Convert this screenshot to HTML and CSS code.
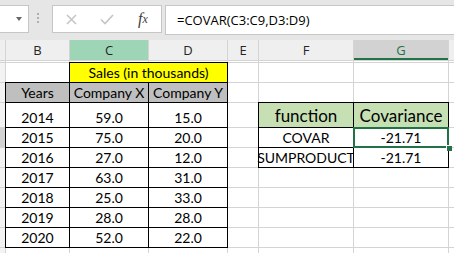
FILE: index.html
```html
<!DOCTYPE html>
<html lang="en">
<head>
  <meta charset="UTF-8">
  <meta name="viewport" content="width=device-width, initial-scale=1.0">
  <title>COVAR vs SUMPRODUCT</title>
  <link rel="stylesheet" href="styles.css">
</head>
<body>
  <div class="formula-bar">
    <div class="name-box"><span class="arrow"></span></div>
    <div class="grip"><i></i><i></i><i></i></div>
    <div class="fx-buttons">
      <span class="btn">
        <svg width="11" height="11" viewBox="0 0 11 11"><path d="M1 1L10 10M10 1L1 10" stroke="#c4c4c4" stroke-width="1.5" fill="none"/></svg>
      </span>
      <span class="btn">
        <svg width="14" height="11" viewBox="0 0 14 11"><path d="M1 5.5L5 9.5L13 1" stroke="#c4c4c4" stroke-width="1.6" fill="none"/></svg>
      </span>
      <span class="btn fx">f<sub>x</sub></span>
    </div>
    <div class="formula-input">=COVAR(C3:C9,D3:D9)</div>
  </div>

  <div class="sheet">
    <!-- column headers -->
    <div class="rh ch"></div>
    <div class="ch">B</div>
    <div class="ch ch-hot">C</div>
    <div class="ch">D</div>
    <div class="ch">E</div>
    <div class="ch">F</div>
    <div class="ch ch-sel">G</div>
    <div class="ch"></div>

    <!-- row 1 (thin) -->
    <div class="rh"></div><div></div><div></div><div></div><div></div><div></div><div></div><div></div>

    <!-- row 2 -->
    <div class="rh"></div>
    <div></div>
    <div class="bx yellow span2">Sales (in thousands)</div>
    <div></div><div></div><div></div><div></div>

    <!-- row 3 -->
    <div class="rh"></div>
    <div class="bx grey">Years</div>
    <div class="bx grey">Company X</div>
    <div class="bx grey">Company Y</div>
    <div></div><div></div><div></div><div></div>

    <!-- row 4 -->
    <div class="rh"></div>
    <div class="bx">2014</div><div class="bx">59.0</div><div class="bx">15.0</div>
    <div></div>
    <div class="bx green big">function</div><div class="bx green big">Covariance</div>
    <div></div>

    <!-- row 5 -->
    <div class="rh rh-sel"></div>
    <div class="bx">2015</div><div class="bx">75.0</div><div class="bx">20.0</div>
    <div></div>
    <div class="bx">COVAR</div><div class="bx selected">-21.71</div>
    <div></div>

    <!-- row 6 -->
    <div class="rh"></div>
    <div class="bx">2016</div><div class="bx">27.0</div><div class="bx">12.0</div>
    <div></div>
    <div class="bx">SUMPRODUCT</div><div class="bx">-21.71</div>
    <div></div>

    <!-- row 7 -->
    <div class="rh"></div>
    <div class="bx">2017</div><div class="bx">63.0</div><div class="bx">31.0</div>
    <div></div><div></div><div></div><div></div>

    <!-- row 8 -->
    <div class="rh"></div>
    <div class="bx">2018</div><div class="bx">25.0</div><div class="bx">33.0</div>
    <div></div><div></div><div></div><div></div>

    <!-- row 9 -->
    <div class="rh"></div>
    <div class="bx">2019</div><div class="bx">28.0</div><div class="bx">28.0</div>
    <div></div><div></div><div></div><div></div>

    <!-- row 10 -->
    <div class="rh"></div>
    <div class="bx">2020</div><div class="bx">52.0</div><div class="bx">22.0</div>
    <div></div><div></div><div></div><div></div>

    <!-- row 11 -->
    <div class="rh"></div><div></div><div></div><div></div><div></div><div></div><div></div><div></div>
  </div>
</body>
</html>
```

FILE: styles.css
```css
body {
  margin: 0;
  height: 253px;
  background-color: white;
  overflow: hidden;
  font-family: Lato, "Liberation Sans", sans-serif;
}

/* formula bar */
.formula-bar {
  height: 40px;
  box-sizing: border-box;
  padding-top: 5px;
  display: flex;
  align-items: flex-start;
  background-color: #e6e6e6;
}
.name-box {
  width: 22px;
  height: 26px;
  margin-left: -1px;
  background-color: white;
  border: 1px solid #c6c6c6;
  display: flex;
  align-items: center;
  justify-content: flex-end;
  padding-right: 6px;
  box-sizing: content-box;
}
.arrow {
  width: 0;
  height: 0;
  border-left: 3px solid transparent;
  border-right: 3px solid transparent;
  border-top: 4px solid #666;
}
.grip {
  margin-left: 8px;
  padding-top: 8px;
  display: flex;
  flex-direction: column;
  gap: 2px;
}
.grip i {
  display: block;
  width: 2px;
  height: 2px;
  background-color: #b0b0b0;
}
.fx-buttons {
  margin-left: 13px;
  width: 108px;
  height: 26px;
  background-color: white;
  border: 1px solid #c6c6c6;
  display: flex;
  align-items: center;
}
.btn {
  width: 36px;
  display: flex;
  justify-content: center;
  align-items: center;
}
.fx {
  font-family: "Liberation Serif", serif;
  font-style: italic;
  font-size: 16px;
  color: #404040;
  line-height: 16px;
}
.fx sub {
  font-size: 12px;
  vertical-align: -1px;
}
.formula-input {
  flex: 1;
  margin-left: 3px;
  margin-right: -2px;
  height: 28px;
  background-color: white;
  border: 1px solid #c6c6c6;
  padding-left: 11px;
  font-family: "Open Sans", sans-serif;
  font-size: 13px;
  line-height: 28px;
  color: #000;
}

/* worksheet grid */
.sheet {
  display: grid;
  grid-template-columns: 5px 63px 78px 78px 30px 94px 94px 1fr;
  grid-template-rows: 20px 1px 19px 19px 24px repeat(6, 19px) 5px;
  gap: 1px;
  background-color: #d4d4d4;
}
.sheet > div {
  background-color: white;
  display: flex;
  align-items: flex-end;
  justify-content: center;
  font-size: 14px;
  line-height: 18px;
  white-space: nowrap;
  color: #000;
}
.sheet > .rh {
  background-color: #f3f3f3;
}
.sheet > .rh-sel {
  background-color: #d2d2d2;
}
.sheet > .ch {
  background-color: #efefef;
  align-items: center;
  font-family: "Open Sans", sans-serif;
  font-size: 13px;
  color: #262626;
}
.sheet > .ch-hot {
  background-color: #9fd5b7;
}
.sheet > .ch-sel {
  background-color: #d2d2d2;
  color: #217346;
  box-shadow: inset 0 -2px 0 #217346;
}

.sheet > .bx {
  box-shadow: 0 0 0 1px #000;
}
.sheet > .span2 {
  grid-column: span 2;
}
.sheet > .yellow {
  background-color: #ffff00;
}
.sheet > .grey {
  background-color: #bfbfbf;
}
.sheet > .green {
  background-color: #c6e0b4;
}
.sheet > .big {
  font-size: 17px;
  line-height: 22px;
}
.sheet > .selected {
  position: relative;
  box-shadow: 0 0 0 1px #217346, inset 0 0 0 1px #217346;
}
.selected::after {
  content: "";
  position: absolute;
  right: -4px;
  bottom: -4px;
  width: 5px;
  height: 5px;
  background-color: #217346;
  border-left: 1px solid white;
  border-top: 1px solid white;
}
```
